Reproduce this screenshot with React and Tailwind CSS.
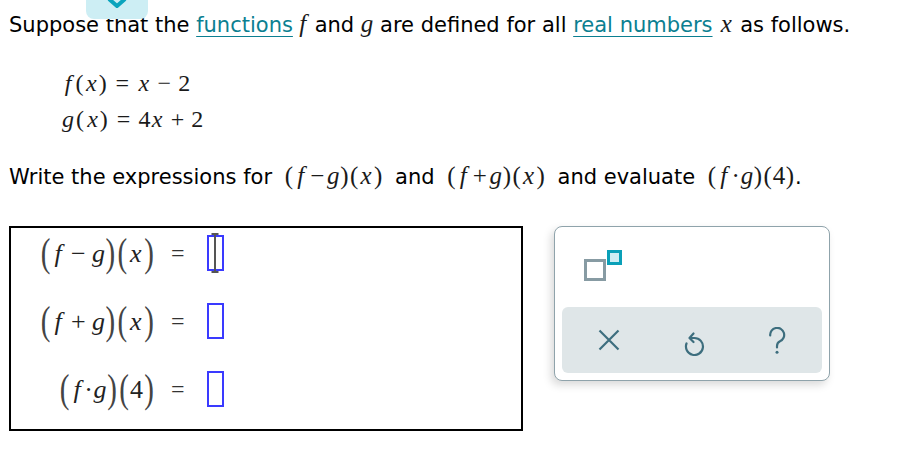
const SERIF = "font-['Liberation_Serif','Times_New_Roman','DejaVu_Serif',serif]";

// one math glyph in a box of MathJax-like width
function G({ w, it, children }) {
  return (
    <span className={`inline-block text-center ${w} ${it ? "italic" : ""}`}>
      {children}
    </span>
  );
}

// inline math, as in the text lines
function M({ children, className = "" }) {
  return (
    <span className={`${SERIF} text-[25px] leading-none text-[#1a1a1a] ${className}`}>
      {children}
    </span>
  );
}

// tall, thin parens of the answer rows
function BigP({ children }) {
  return (
    <span className="inline-block w-[12px] origin-center scale-y-[1.35] text-center text-[29px] leading-none text-[#444]">
      {children}
    </span>
  );
}

function AnswerBox({ cursor }) {
  return (
    <span className="relative inline-block h-[36px] w-[17px] border-2 border-[#3a3aff]">
      {cursor && (
        <>
          <span className="absolute left-1/2 top-[-3px] bottom-[-3px] w-[2px] -translate-x-1/2 bg-[#555]" />
          <span className="absolute left-1/2 top-[-4px] h-[2px] w-[7px] -translate-x-1/2 bg-[#555]" />
          <span className="absolute left-1/2 bottom-[-4px] h-[2px] w-[7px] -translate-x-1/2 bg-[#555]" />
        </>
      )}
    </span>
  );
}

function Row({ children, cursor }) {
  return (
    <div className={`${SERIF} flex h-[50px] items-center`}>
      <div className="flex w-[144px] items-center justify-end text-[26px] text-[#222]">
        {children}
      </div>
      <span className="ml-[16px] text-[24px] leading-none text-[#333]">=</span>
      <span className="ml-[22px] flex items-center">
        <AnswerBox cursor={cursor} />
      </span>
    </div>
  );
}

export default function App() {
  return (
    <div className="relative h-[450px] w-[901px] overflow-hidden bg-white font-['DejaVu_Sans',Verdana,sans-serif] text-black">
      {/* top tab */}
      <div className="absolute left-[86px] top-0 flex h-[19px] w-[62px] justify-center rounded-b-lg bg-[#cdeef4]">
        <svg width="22" height="10" viewBox="0 0 22 10" className="-mt-[2px]">
          <path d="M3 1 L11 8 L19 1" fill="none" stroke="#0aa4bd" strokeWidth="4" />
        </svg>
      </div>

      <p className="pl-[9px] pt-[11px] text-[21px] leading-[28px]">
        Suppose that the{" "}
        <span className="text-[#0b7f91] underline decoration-1 underline-offset-[4px]">functions</span>
        <M className="ml-[3px] mr-[5px]">
          <G w="w-[0.55em]" it>f</G>
        </M>
        and{" "}
        <M>
          <G w="w-[0.5em]" it>g</G>
        </M>{" "}
        are defined for all{" "}
        <span className="text-[#0b7f91] underline decoration-1 underline-offset-[4px]">real numbers</span>{" "}
        <M>
          <G w="w-[0.57em]" it>x</G>
        </M>{" "}
        as follows.
      </p>

      <div className={`${SERIF} ml-[62px] mt-[26px] flex flex-col text-[24px] leading-[36px] text-[#1a1a1a]`}>
        <div>
          <G w="w-[0.5em]" it>f</G>
          <G w="w-[0.45em]">(</G>
          <G w="w-[0.55em]" it>x</G>
          <G w="w-[0.39em]">)</G>
          <G w="w-[1.25em]">=</G>
          <G w="w-[0.55em]" it>x</G>
          <G w="w-[1.15em]">−</G>
          <G w="w-[0.5em]">2</G>
        </div>
        <div>
          <G w="w-[0.5em]" it>g</G>
          <G w="w-[0.5em]">(</G>
          <G w="w-[0.55em]" it>x</G>
          <G w="w-[0.39em]">)</G>
          <G w="w-[1.25em]">=</G>
          <G w="w-[0.5em]">4</G>
          <G w="w-[0.55em]" it>x</G>
          <G w="w-[1.15em]">+</G>
          <G w="w-[0.5em]">2</G>
        </div>
      </div>

      <p className="pl-[9px] pt-[26px] text-[21px] leading-[28px]">
        Write the expressions for
        <M className="mx-[12px]">
          <G w="w-[0.39em]">(</G>
          <G w="w-[0.55em]" it>f</G>
          <G w="w-[0.78em]">−</G>
          <G w="w-[0.5em]" it>g</G>
          <G w="w-[0.39em]">)</G>
          <G w="w-[0.39em]">(</G>
          <G w="w-[0.57em]" it>x</G>
          <G w="w-[0.39em]">)</G>
        </M>
        and
        <M className="mx-[12px]">
          <G w="w-[0.39em]">(</G>
          <G w="w-[0.55em]" it>f</G>
          <G w="w-[0.78em]">+</G>
          <G w="w-[0.5em]" it>g</G>
          <G w="w-[0.39em]">)</G>
          <G w="w-[0.39em]">(</G>
          <G w="w-[0.57em]" it>x</G>
          <G w="w-[0.39em]">)</G>
        </M>
        and evaluate
        <M className="ml-[12px]">
          <G w="w-[0.39em]">(</G>
          <G w="w-[0.55em]" it>f</G>
          <G w="w-[0.4em]">·</G>
          <G w="w-[0.5em]" it>g</G>
          <G w="w-[0.39em]">)</G>
          <G w="w-[0.39em]">(</G>
          <G w="w-[0.5em]">4</G>
          <G w="w-[0.39em]">)</G>
        </M>
        .
      </p>

      <div className="mt-[35px] flex items-start pl-[9px]">
        <div className="flex h-[205px] w-[514px] flex-col gap-[18px] border-2 border-black">
          <Row cursor>
            <BigP>(</BigP>
            <G w="w-[0.5em]" it>f</G>
            <G w="w-[1.05em]">−</G>
            <G w="w-[0.48em]" it>g</G>
            <BigP>)</BigP>
            <BigP>(</BigP>
            <G w="w-[0.56em]" it>x</G>
            <BigP>)</BigP>
          </Row>
          <Row>
            <BigP>(</BigP>
            <G w="w-[0.5em]" it>f</G>
            <G w="w-[1.05em]">+</G>
            <G w="w-[0.48em]" it>g</G>
            <BigP>)</BigP>
            <BigP>(</BigP>
            <G w="w-[0.56em]" it>x</G>
            <BigP>)</BigP>
          </Row>
          <Row>
            <BigP>(</BigP>
            <G w="w-[0.5em]" it>f</G>
            <G w="w-[0.38em]">·</G>
            <G w="w-[0.48em]" it>g</G>
            <BigP>)</BigP>
            <BigP>(</BigP>
            <G w="w-[0.5em]">4</G>
            <BigP>)</BigP>
          </Row>
        </div>

        <div className="ml-[31px] flex h-[155px] w-[276px] flex-col rounded-lg border border-[#8fa3ab] bg-white shadow-[-3px_4px_8px_rgba(0,0,0,0.15)]">
          <div className="flex h-[80px] items-start pl-[29px] pt-[23px]">
            <div className="relative h-[31px] w-[40px]">
              <span className="absolute left-0 top-[9px] h-[22px] w-[22px] border-[3px] border-[#879ba3]" />
              <span className="absolute left-[23px] top-0 h-[15px] w-[15px] border-[3px] border-[#0aa0b8] bg-[#cdeef4]" />
            </div>
          </div>
          <div className="mx-[7px] flex h-[66px] items-center justify-around rounded-md bg-[#dfe6e8]">
            <svg width="22" height="22" viewBox="0 0 22 22">
              <path d="M1.5 1.5 L20.5 20.5 M20.5 1.5 L1.5 20.5" stroke="#3d6e7e" strokeWidth="2.2" fill="none" />
            </svg>
            <svg width="22" height="28" viewBox="0 0 22 28" className="-ml-[10px] mt-[4px]">
              <path
                d="M6.5 10 H11.5 A8.5 8.5 0 1 1 3.5 15.5 M10.5 5.5 L6.5 10 L10.5 14"
                stroke="#3d6e7e"
                strokeWidth="2.2"
                fill="none"
                strokeLinecap="round"
                strokeLinejoin="round"
              />
            </svg>
            <svg width="18" height="28" viewBox="0 0 18 28" className="-ml-[10px] mt-[2px]">
              <path
                d="M2.2 8.5 A7 7 0 1 1 12 14.3 C10 15.3 9 16.5 9 19 V20.5"
                stroke="#3d6e7e"
                strokeWidth="2.2"
                fill="none"
                strokeLinecap="round"
              />
              <circle cx="9" cy="25.3" r="1.5" fill="#3d6e7e" />
            </svg>
          </div>
        </div>
      </div>
    </div>
  );
}
